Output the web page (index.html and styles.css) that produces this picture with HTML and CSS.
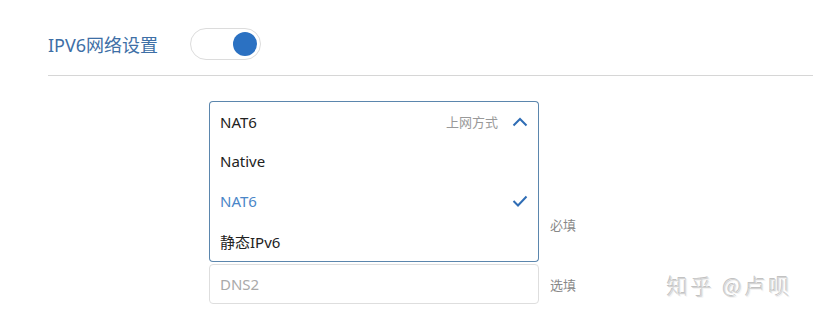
FILE: index.html
```html
<!DOCTYPE html>
<html>
<head>
    <meta charset="utf-8">
    <link rel="stylesheet" href="styles.css">
</head>
<body>
    <div class="section">
        <div class="section-head">
            <span class="section-title">IPV6网络设置</span>
            <span class="switch is-on"><span class="switch-knob"></span></span>
        </div>
        <div class="form">
            <div class="form-row">
                <div class="select is-open">
                    <div class="select-head">
                        <span class="select-value">NAT6</span>
                        <span class="select-label">上网方式</span>
                        <svg class="select-arrow" width="16" height="10" viewBox="0 0 16 10"><path d="M1.5 8.5 L8 2 L14.5 8.5" fill="none" stroke="#2f6db5" stroke-width="2"/></svg>
                    </div>
                    <ul class="select-menu">
                        <li class="select-option">Native</li>
                        <li class="select-option is-active">NAT6
                            <svg class="select-check" width="16" height="12" viewBox="0 0 16 12"><path d="M1.5 6 L6 10.5 L14.5 1.5" fill="none" stroke="#2f6db5" stroke-width="2"/></svg>
                        </li>
                        <li class="select-option">静态IPv6</li>
                    </ul>
                </div>
            </div>
            <div class="form-row row-dns1">
                <input class="input" type="text" placeholder="DNS1">
                <span class="hint">必填</span>
            </div>
            <div class="form-row row-dns2">
                <input class="input" type="text" placeholder="DNS2">
                <span class="hint">选填</span>
            </div>
        </div>
    </div>
    <div class="watermark">知乎 @卢呗</div>
</body>
</html>
```

FILE: styles.css
```css
body {
  margin: 0;
  background-color: #fff;
  font-family: "Noto Sans", "Noto Sans CJK SC", sans-serif;
  color: #333;
  overflow: hidden;
}
.section {
  padding-left: 48px;
}
.section-head {
  display: flex;
  align-items: center;
  height: 76px;
  padding-top: 12px;
  border-bottom: 1px solid #d6d6d6;
  box-sizing: border-box;
}
.section-title {
  font-size: 18px;
  color: #3e6fa6;
  width: 142px;
}
.switch {
  display: flex;
  align-items: center;
  justify-content: flex-end;
  width: 71px;
  height: 32px;
  padding: 0 3px;
  box-sizing: border-box;
  border: 1px solid #dcdcdc;
  border-radius: 16px;
}
.switch-knob {
  width: 24px;
  height: 24px;
  border-radius: 50%;
  background-color: #2b71c2;
}
.form {
  padding-left: 161px;
  padding-top: 25px;
}
.form-row {
  display: flex;
  align-items: center;
  position: relative;
}
.select {
  position: relative;
  width: 330px;
  height: 40px;
  z-index: 2;
}
.select-head {
  display: flex;
  align-items: center;
  height: 39px;
  padding: 0 10px;
  background-color: #fff;
  border: 1px solid #5b86ad;
  border-bottom-color: #d9d9d9;
  border-radius: 4px 4px 0 0;
}
.select-value {
  flex: 1;
  font-size: 15px;
  color: #222;
}
.select-label {
  font-size: 13px;
  color: #999;
  margin-right: 14px;
}
.select-menu {
  position: absolute;
  top: 40px;
  left: 0;
  right: 0;
  margin: 0;
  padding: 0;
  list-style: none;
  background-color: #fff;
  border: 1px solid #5b86ad;
  border-top: none;
  border-radius: 0 0 4px 4px;
}
.select-option {
  display: flex;
  align-items: center;
  justify-content: space-between;
  height: 40px;
  padding: 0 10px;
  font-size: 15px;
  color: #222;
}
.select-option.is-active {
  color: #4a86c8;
}
.row-dns1 {
  margin-top: 63px;
}
.row-dns2 {
  margin-top: 20px;
}
.input {
  width: 330px;
  height: 40px;
  box-sizing: border-box;
  border: 1px solid #dedede;
  border-radius: 4px;
  padding: 0 10px;
  font-family: "Noto Sans", "Noto Sans CJK SC", sans-serif;
  font-size: 15px;
  color: #333;
  outline: none;
}
.input::placeholder {
  color: #aaa;
}
.hint {
  margin-left: 11px;
  font-size: 13px;
  color: #888;
}
.watermark {
  position: absolute;
  left: 667px;
  top: 270px;
  font-size: 21px;
  font-weight: 300;
  color: #d4d4d4;
  letter-spacing: 3px;
  text-shadow: 1px 1px 0 #f4f4f4, -1px -1px 0 #c2c2c2;
  font-family: "Noto Sans CJK SC", sans-serif;
}
```
